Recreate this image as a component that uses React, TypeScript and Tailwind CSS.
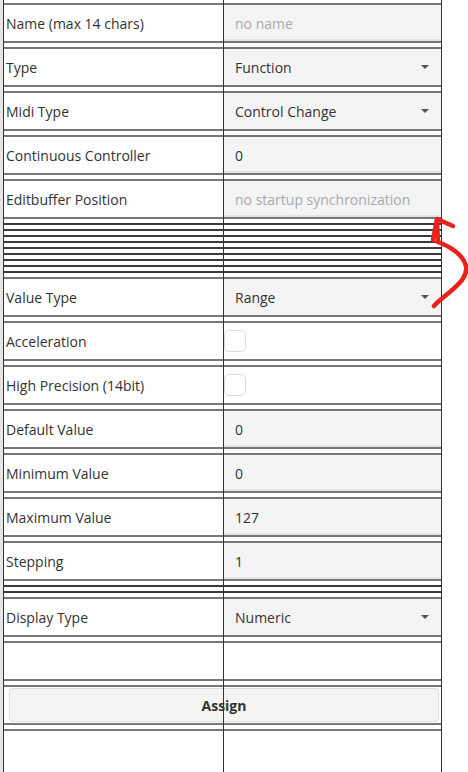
import React from 'react';

type Field =
  | { label: string; kind: 'input'; value?: string; placeholder?: string }
  | { label: string; kind: 'select'; value: string }
  | { label: string; kind: 'check' }
  | { label: string; kind: 'empty' };

const MIDI_FIELDS: Field[] = [
  { label: 'Name (max 14 chars)', kind: 'input', placeholder: 'no name' },
  { label: 'Type', kind: 'select', value: 'Function' },
  { label: 'Midi Type', kind: 'select', value: 'Control Change' },
  { label: 'Continuous Controller', kind: 'input', value: '0' },
  { label: 'Editbuffer Position', kind: 'input', placeholder: 'no startup synchronization' },
];

const VALUE_FIELDS: Field[] = [
  { label: 'Value Type', kind: 'select', value: 'Range' },
  { label: 'Acceleration', kind: 'check' },
  { label: 'High Precision (14bit)', kind: 'check' },
  { label: 'Default Value', kind: 'input', value: '0' },
  { label: 'Minimum Value', kind: 'input', value: '0' },
  { label: 'Maximum Value', kind: 'input', value: '127' },
  { label: 'Stepping', kind: 'input', value: '1' },
];

const DISPLAY_FIELDS: Field[] = [
  { label: 'Display Type', kind: 'select', value: 'Numeric' },
  { label: '', kind: 'empty' },
];

function Control({ field }: { field: Field }) {
  if (field.kind === 'input') {
    return (
      <div className="flex h-full items-center bg-[#f4f4f4] pl-[11px] shadow-[inset_0_-2px_0_#e3e3e3]">
        {field.value ? (
          <span className="text-[#333]">{field.value}</span>
        ) : (
          <span className="text-[#aaa]">{field.placeholder}</span>
        )}
      </div>
    );
  }
  if (field.kind === 'select') {
    return (
      <div className="flex h-full items-center justify-between bg-[#f4f4f4] pl-[11px] pr-[12px]">
        <span className="text-[#333]">{field.value}</span>
        <span className="h-0 w-0 border-x-[4px] border-t-[4px] border-x-transparent border-t-[#555]" />
      </div>
    );
  }
  if (field.kind === 'check') {
    return (
      <div className="flex h-full items-center">
        <span className="h-[22px] w-[22px] rounded-[5px] border border-[#dcdcdc] bg-white" />
      </div>
    );
  }
  return null;
}

function Row({ field }: { field: Field }) {
  return (
    <div className="grid h-[40px] grid-cols-[219px_1fr] border-y-2 border-[#777]">
      <div className="flex items-center pl-[2px] text-[#333]">{field.label}</div>
      <div className="pl-[1px]">
        <Control field={field} />
      </div>
    </div>
  );
}

function Stripes({ count }: { count: number }) {
  return (
    <div className="flex flex-col gap-[4px]">
      {Array.from({ length: count }).map((_, i) => (
        <div key={i} className="h-[2px] bg-[#3a3a3a]" />
      ))}
    </div>
  );
}

export default function App() {
  return (
    <div
      className="relative flex h-[772px] w-[468px] overflow-hidden bg-white text-[14px]"
      style={{ fontFamily: '"Open Sans", "Noto Sans", sans-serif' }}
    >
      <div className="h-full w-[3px] bg-[#e6e6e6]" />
      <div className="flex h-full w-[439px] flex-col gap-[4px] border-x border-[#333] pt-[3px]">
        {MIDI_FIELDS.map((f) => (
          <Row key={f.label} field={f} />
        ))}
        <Stripes count={9} />
        {VALUE_FIELDS.map((f) => (
          <Row key={f.label} field={f} />
        ))}
        <Stripes count={2} />
        {DISPLAY_FIELDS.map((f, i) => (
          <Row key={i} field={f} />
        ))}
        <div className="flex h-[40px] items-center border-y-2 border-[#777] pl-[5px] pr-[2px]">
          <button
            type="button"
            className="h-[34px] w-full rounded-[4px] border border-[#dcdcdc] bg-[#f4f4f4] font-bold text-[#333]"
          >
            Assign
          </button>
        </div>
        <div className="flex-1 border-t-2 border-[#777]" />
      </div>

      {/* column divider runs over the rows and the button */}
      <div className="pointer-events-none absolute left-[223px] top-0 h-full w-px bg-[#333]" />

      {/* hand-drawn annotation */}
      <svg className="pointer-events-none absolute left-0 top-0" width="468" height="772" viewBox="0 0 468 772">
        <g fill="none" stroke="#e8221b" strokeWidth="4.5" strokeLinecap="round" strokeLinejoin="round">
          <path d="M433 240 L437 219 L453 226" />
          <path d="M437 221 L438 242" />
          <path d="M438 242 C449 246 463 254 466 266 C468 276 459 284 451 291 C444 297 437 302 434 306" />
        </g>
      </svg>
    </div>
  );
}
